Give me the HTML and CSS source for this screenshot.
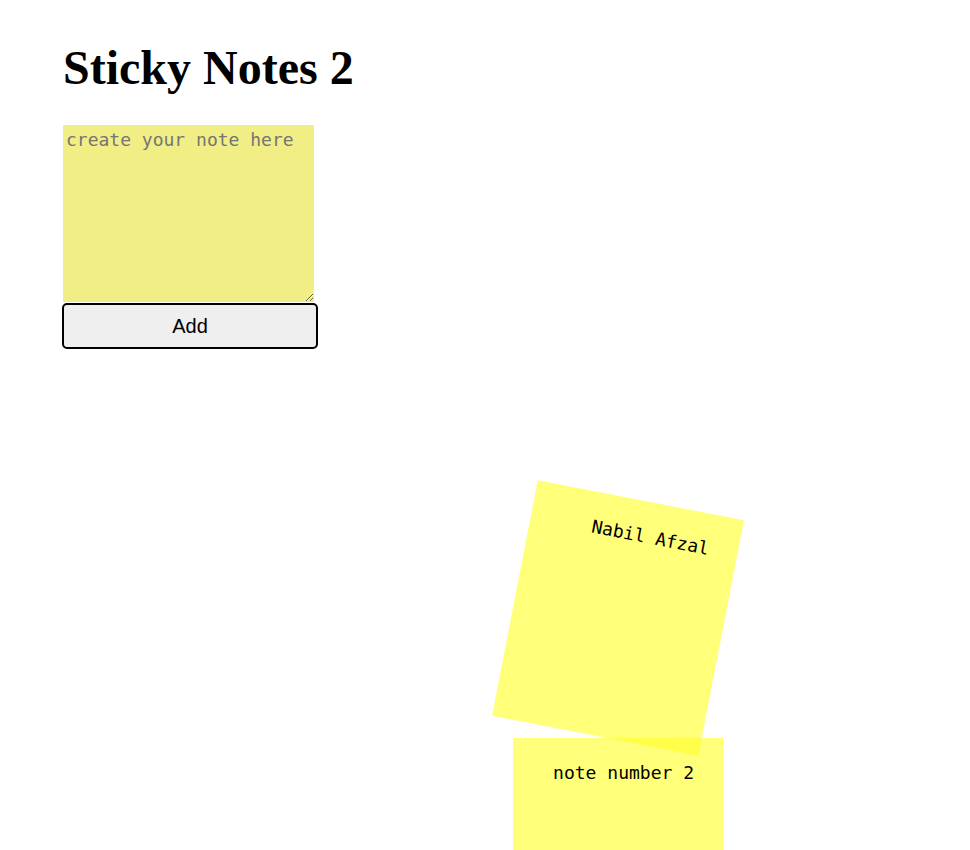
FILE: index.html
```html
<!DOCTYPE html>
<html lang="en">
<head>
<meta charset="utf-8">
<title>Sticky Notes 2</title>
<link rel="stylesheet" href="styles.css">
</head>
<body>
  <main class="app">
    <h1 class="app-title">Sticky Notes 2</h1>
    <form class="composer">
      <textarea class="composer-input" placeholder="create your note here"></textarea>
      <button type="button" class="composer-add">Add</button>
    </form>
    <section class="board">
      <div class="note note-tilted">Nabil Afzal</div>
      <div class="note">note number 2</div>
    </section>
  </main>
</body>
</html>
```

FILE: styles.css
```css
html, body {
  background: #ffffff;
}

body {
  margin: 8px;
  overflow: hidden;
}

.app {
  padding-left: 55px;
}

.app-title {
  margin: 32px 0 30px;
  font-family: "Liberation Serif", "Times New Roman", serif;
  font-size: 48px;
  font-weight: bold;
  color: #000000;
}

.composer {
  display: flex;
  flex-direction: column;
  align-items: flex-start;
  margin: 0;
}

.composer-input {
  box-sizing: border-box;
  width: 251px;
  height: 177px;
  margin: 0 0 1px 0;
  padding: 4px 2px 2px 3px;
  border: none;
  outline: none;
  background: #f0ee84;
  font-family: "DejaVu Sans Mono", monospace;
  font-size: 18px;
  color: #000000;
}

.composer-input::placeholder {
  color: #757575;
}

.composer-add {
  box-sizing: border-box;
  width: 256px;
  height: 46px;
  margin-left: -1px;
  border: 2px solid #000000;
  border-radius: 5px;
  background: #efefef;
  font-family: "Liberation Sans", Arial, sans-serif;
  font-size: 20px;
  color: #000000;
}

.board {
  display: flex;
  flex-direction: column;
  align-items: flex-start;
  padding: 149px 0 0 450px;
}

.note {
  box-sizing: border-box;
  width: 210px;
  height: 240px;
  padding: 24px 29px 0;
  background: rgba(255, 255, 47, 0.64);
  font-family: "DejaVu Sans Mono", monospace;
  font-size: 18px;
  text-align: right;
  color: #000000;
}

.note-tilted {
  transform: rotate(11deg);
}
```
